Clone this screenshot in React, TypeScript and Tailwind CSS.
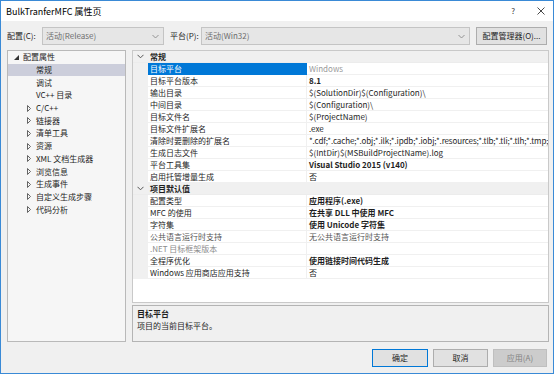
import React from "react";

const FONT = "font-['Noto_Sans_CJK_SC','Noto_Sans',sans-serif]";

function Chevron() {
  return (
    <svg width="7" height="5" viewBox="0 0 7 5" className="shrink-0">
      <polyline points="0.5,0.8 3.5,3.8 6.5,0.8" fill="none" stroke="#555" strokeWidth="1" />
    </svg>
  );
}

function ComboChevron() {
  return (
    <svg width="7" height="5" viewBox="0 0 7 5" className="shrink-0">
      <polyline points="0.5,1 3.5,4 6.5,1" fill="none" stroke="#8a8a8a" strokeWidth="0.9" />
    </svg>
  );
}

function TriOpen() {
  return (
    <svg width="5" height="5" viewBox="0 0 5 5" className="shrink-0">
      <polygon points="5,0 5,5 0,5" fill="#333" />
    </svg>
  );
}

function TriClosed() {
  return (
    <svg width="4" height="7" viewBox="0 0 4 7" className="shrink-0">
      <polygon points="0.5,0.5 3.5,3.5 0.5,6.5" fill="none" stroke="#555" strokeWidth="0.9" />
    </svg>
  );
}

type Row = {
  name: string;
  value: string;
  bold?: boolean;
  dimName?: "mid" | "light";
  dimValue?: boolean;
  selected?: boolean;
  tight?: boolean;
};

const general: Row[] = [
  { name: "目标平台", value: "Windows", selected: true, dimValue: true },
  { name: "目标平台版本", value: "8.1", bold: true },
  { name: "输出目录", value: "$(SolutionDir)$(Configuration)\\" },
  { name: "中间目录", value: "$(Configuration)\\" },
  { name: "目标文件名", value: "$(ProjectName)" },
  { name: "目标文件扩展名", value: ".exe" },
  { name: "清除时要删除的扩展名", value: "*.cdf;*.cache;*.obj;*.ilk;*.ipdb;*.iobj;*.resources;*.tlb;*.tli;*.tlh;*.tmp;", tight: true },
  { name: "生成日志文件", value: "$(IntDir)$(MSBuildProjectName).log" },
  { name: "平台工具集", value: "Visual Studio 2015 (v140)", bold: true },
  { name: "启用托管增量生成", value: "否" },
];

const defaults: Row[] = [
  { name: "配置类型", value: "应用程序(.exe)", bold: true },
  { name: "MFC 的使用", value: "在共享 DLL 中使用 MFC", bold: true },
  { name: "字符集", value: "使用 Unicode 字符集", bold: true },
  { name: "公共语言运行时支持", value: "无公共语言运行时支持", dimName: "mid", dimValue: true },
  { name: ".NET 目标框架版本", value: "", dimName: "light" },
  { name: "全程序优化", value: "使用链接时间代码生成", bold: true },
  { name: "Windows 应用商店应用支持", value: "否" },
];

function Category({ label }: { label: string }) {
  return (
    <div className="h-[12px] bg-[#f0f0f0] flex items-center pl-[4px] gap-[6px] border-b border-[#ececec]">
      <Chevron />
      <span className="font-bold text-[8px] leading-none text-[#1e1e1e]">{label}</span>
    </div>
  );
}

function GridRow({ r }: { r: Row }) {
  const nameColor = r.dimName === "light" ? "text-[#8c8c8c]" : r.dimName === "mid" ? "text-[#555555]" : "text-[#1e1e1e]";
  return (
    <div className="h-[12px] flex">
      <div className="w-[15px] shrink-0 bg-[#f0f0f0]" />
      <div
        className={
          "w-[159px] shrink-0 flex items-center pl-[2px] border-b border-r " +
          (r.selected ? "bg-[#0078d7] text-white border-[#0078d7]" : "border-[#f0f0f0] " + nameColor)
        }
      >
        <span className="text-[8px] leading-none whitespace-nowrap">{r.name}</span>
      </div>
      <div className="flex-1 min-w-0 flex items-center pl-[2px] border-b border-[#f0f0f0] overflow-hidden">
        <span
          className={
            "text-[8px] leading-none whitespace-nowrap " +
            (r.tight ? "tracking-[-0.12px] " : "") +
            (r.bold ? "font-bold text-[#1e1e1e] " : "") +
            (r.selected ? "text-[#9a9a9a]" : r.dimValue ? "text-[#555555]" : "text-[#1e1e1e]")
          }
        >
          {r.value}
        </span>
      </div>
    </div>
  );
}

const tree = [
  { label: "常规", kids: false, selected: true },
  { label: "调试", kids: false },
  { label: "VC++ 目录", kids: false },
  { label: "C/C++", kids: true },
  { label: "链接器", kids: true },
  { label: "清单工具", kids: true },
  { label: "资源", kids: true },
  { label: "XML 文档生成器", kids: true },
  { label: "浏览信息", kids: true },
  { label: "生成事件", kids: true },
  { label: "自定义生成步骤", kids: true },
  { label: "代码分析", kids: true },
];

export default function App() {
  return (
    <div className={"w-[554px] h-[374px] border border-[#3a8ad6] bg-[#f0f0f0] flex flex-col text-[#1e1e1e] " + FONT}>
      {/* title bar */}
      <div className="h-[20px] bg-white flex items-center pl-[5px] pr-[8px] shrink-0">
        <span className="text-[9px] leading-none text-black">BulkTranferMFC 属性页</span>
        <div className="flex-1" />
        <span className="text-[8px] leading-none text-[#333] mr-[22px]">?</span>
        <svg width="8" height="8" viewBox="0 0 8 8">
          <path d="M0.5 0.5 L7.5 7.5 M7.5 0.5 L0.5 7.5" stroke="#333" strokeWidth="0.9" />
        </svg>
      </div>

      <div className="flex-1 flex flex-col px-[6px] pt-[6px] pb-[5px]">
        {/* config row */}
        <div className="h-[18px] flex items-center shrink-0">
          <span className="w-[35px] shrink-0 text-[8px] leading-none whitespace-nowrap">配置(C):</span>
          <div className="w-[122px] shrink-0 h-[18px] border border-[#c4c4c4] bg-[#e6e6e6] flex items-center pl-[3px] pr-[4px]">
            <span className="flex-1 text-[8px] leading-none text-[#6d6d6d]">活动(Release)</span>
            <ComboChevron />
          </div>
          <span className="w-[31px] shrink-0 ml-[6px] text-[8px] leading-none whitespace-nowrap">平台(P):</span>
          <div className="flex-1 h-[18px] border border-[#c4c4c4] bg-[#e6e6e6] flex items-center pl-[3px] pr-[4px]">
            <span className="flex-1 text-[8px] leading-none text-[#6d6d6d]">活动(Win32)</span>
            <ComboChevron />
          </div>
          <div className="w-[71px] shrink-0 ml-[6px] h-[18px] border border-[#adadad] bg-[#e1e1e1] flex items-center justify-center">
            <span className="text-[8px] leading-none whitespace-nowrap">配置管理器(O)...</span>
          </div>
        </div>

        {/* main */}
        <div className="mt-[5px] h-[292px] flex shrink-0">
          {/* tree */}
          <div className="w-[119px] shrink-0 border border-[#b9b9b9] bg-[#f6f6f6] flex flex-col">
            <div className="h-[12.7px] flex items-center pl-[6px] gap-[4px] shrink-0">
              <TriOpen />
              <span className="text-[8px] leading-none">配置属性</span>
            </div>
            {tree.map((t) => (
              <div
                key={t.label}
                className={"h-[12.7px] flex items-center shrink-0 " + (t.selected ? "bg-[#cccedb]" : "")}
              >
                <div className="w-[28px] shrink-0 flex justify-end pr-[5px]">{t.kids ? <TriClosed /> : null}</div>
                <span className="text-[8px] leading-none whitespace-nowrap">{t.label}</span>
              </div>
            ))}
          </div>

          {/* right column */}
          <div className="ml-[6px] flex-1 flex flex-col">
            <div className="h-[253px] border border-[#c9c9c9] bg-white flex flex-col overflow-hidden shrink-0">
              <Category label="常规" />
              {general.map((r) => (
                <GridRow key={r.name} r={r} />
              ))}
              <Category label="项目默认值" />
              {defaults.map((r) => (
                <GridRow key={r.name} r={r} />
              ))}
            </div>
            <div className="mt-[2px] flex-1 border border-[#b4b4b4] bg-[#f0f0f0] px-[4px] pt-[3px] flex flex-col gap-[3px]">
              <span className="text-[8px] leading-[9px] font-bold">目标平台</span>
              <span className="text-[8px] leading-[9px]">项目的当前目标平台。</span>
            </div>
          </div>
        </div>

        {/* buttons */}
        <div className="mt-[7px] h-[18px] flex justify-end gap-[5px] shrink-0">
          <div className="w-[56px] h-[18px] border border-[#0078d7] bg-[#e1e1e1] flex items-center justify-center">
            <span className="text-[8px] leading-none">确定</span>
          </div>
          <div className="w-[55px] h-[18px] border border-[#adadad] bg-[#e1e1e1] flex items-center justify-center">
            <span className="text-[8px] leading-none">取消</span>
          </div>
          <div className="w-[54px] h-[18px] border border-[#bfbfbf] bg-[#cccccc] flex items-center justify-center">
            <span className="text-[8px] leading-none text-[#838383]">应用(A)</span>
          </div>
        </div>
      </div>
    </div>
  );
}
